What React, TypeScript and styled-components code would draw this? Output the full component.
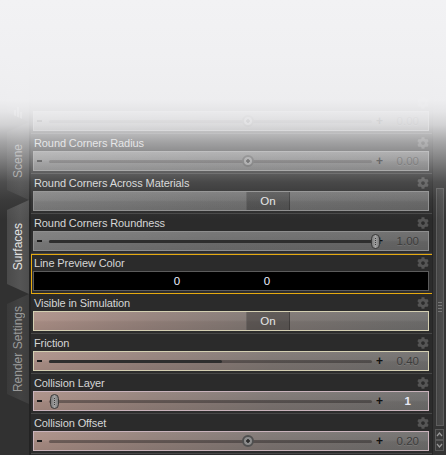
import React from 'react';
import styled, { createGlobalStyle, css } from 'styled-components';
import { FaCog } from 'react-icons/fa';

const Global = createGlobalStyle`
  html, body { margin: 0; padding: 0; background: #2c2c2c; }
  body { font-family: "Liberation Sans", Arial, sans-serif; }
  * { box-sizing: border-box; }
`;

const Frame = styled.div`
  position: relative;
  width: 446px;
  height: 455px;
  overflow: hidden;
  display: flex;
  background: #2c2c2c;
`;

const TabBar = styled.div`
  width: 31px;
  flex: none;
  display: flex;
  flex-direction: column;
  padding-top: 50px;
  background: #313131;
  border-right: 2px solid #232323;
`;

const Tab = styled.div<{ $active?: boolean; $h: number }>`
  height: ${(p) => p.$h}px;
  margin-left: 7px;
  width: 22px;
  display: flex;
  align-items: center;
  justify-content: center;
  clip-path: polygon(0 10px, 100% 0, 100% 100%, 0 calc(100% - 10px));
  background: ${(p) => (p.$active ? 'linear-gradient(90deg,#4a4a4a,#555 60%,#4e4e4e)' : 'linear-gradient(90deg,#3a3a3a,#424242 60%,#3e3e3e)')};
  color: ${(p) => (p.$active ? '#e4e4e4' : '#9a9a9a')};
  font-size: 12px;
`;

const TabLabel = styled.span`
  writing-mode: vertical-rl;
  transform: rotate(180deg);
  white-space: nowrap;
`;

const TabIcon = styled.svg`
  margin-top: 56px;
`;

const Content = styled.div`
  flex: 1;
  display: flex;
  flex-direction: column;
  padding-top: 94px;
  min-width: 0;
`;

const Block = styled.div<{ $selected?: boolean }>`
  height: 40px;
  flex: none;
  display: flex;
  flex-direction: column;
  border-bottom: 1px solid #474747;
  ${(p) =>
    p.$selected &&
    css`
      outline: 1px solid #e6aa10;
      outline-offset: -1px;
      margin-right: -1px;
      padding-right: 1px;
    `}
`;

const Header = styled.div`
  height: 17px;
  flex: none;
  display: flex;
  align-items: center;
  justify-content: space-between;
  padding: 0 2px 0 3px;
  background: #2b2b2b;
`;

const Label = styled.span`
  color: #d6d6d6;
  font-size: 11px;
  letter-spacing: -0.1px;
  white-space: nowrap;
`;

const Gear = styled(FaCog)`
  width: 12px;
  height: 12px;
  color: #555;
  margin-right: 1px;
`;

type Tone = 'gray' | 'pink' | 'cream';

const borderFor: Record<Tone, string> = {
  gray: '#8e8e8e',
  cream: '#d4cfb2',
  pink: '#c9b3bb',
};

const bgFor: Record<Tone, string> = {
  gray: 'linear-gradient(90deg,#7b7b7b 0%,#6e6e6e 45%,#666 100%)',
  cream: 'linear-gradient(90deg,#ac9087 0%,#93807a 30%,#7d7571 60%,#6e6d6c 100%)',
  pink: 'linear-gradient(90deg,#a98d84 0%,#917f79 30%,#7c7471 60%,#6d6c6b 100%)',
};

const Box = styled.div<{ $tone: Tone }>`
  height: 20px;
  flex: none;
  margin: 0 3px 0 2px;
  border: 1px solid ${(p) => borderFor[p.$tone]};
  display: flex;
  align-items: center;
  position: relative;
  background: linear-gradient(180deg, rgba(255,255,255,0.07) 0%, rgba(255,255,255,0.03) 45%, rgba(0,0,0,0.04) 55%, rgba(0,0,0,0.08) 100%),
    ${(p) => bgFor[p.$tone]};
`;

const Minus = styled.span`
  width: 5px;
  height: 2px;
  margin-left: 3px;
  background: #1c1c1c;
  flex: none;
`;

const Track = styled.div`
  flex: 1;
  height: 3px;
  margin-left: 7px;
  border-radius: 2px;
  background: rgba(40, 36, 36, 0.45);
  position: relative;
`;

const Fill = styled.div`
  position: absolute;
  left: 0;
  top: 0;
  bottom: 0;
  border-radius: 2px;
  background: #2e2e2e;
`;

const KnobCircle = styled.div`
  position: absolute;
  top: 50%;
  width: 12px;
  height: 12px;
  margin: -6px 0 0 -6px;
  border-radius: 50%;
  border: 2px solid #505050;
  background: radial-gradient(circle, #2e2e2e 0 1.5px, #8c8c8c 2px);
`;

const KnobPill = styled.div`
  position: absolute;
  top: 50%;
  width: 9px;
  height: 15px;
  margin: -7.5px 0 0 -4.5px;
  border-radius: 5px;
  border: 1px solid #3a3a3a;
  background: linear-gradient(90deg, #7a7a7a, #a2a2a2 50%, #7c7c7c);
  &::after {
    content: '';
    position: absolute;
    left: 3px;
    top: 3px;
    bottom: 3px;
    border-left: 1px dotted #3a3a3a;
  }
`;

const Plus = styled.span`
  flex: none;
  margin-left: 4px;
  width: 7px;
  color: #111;
  font-weight: bold;
  font-size: 12px;
  line-height: 10px;
  text-align: center;
`;

const Value = styled.span<{ $int?: boolean }>`
  flex: none;
  width: 45px;
  padding-right: ${(p) => (p.$int ? '17px' : '9px')};
  text-align: right;
  font-size: 11.5px;
  color: ${(p) => (p.$int ? '#e6e9f4' : '#3c3c3c')};
  font-weight: ${(p) => (p.$int ? 'bold' : 'normal')};
  text-shadow: ${(p) => (p.$int ? 'none' : '0 1px 0 rgba(255,255,255,0.12)')};
`;

const OnButton = styled.div`
  margin-left: 212px;
  width: 44px;
  align-self: stretch;
  display: flex;
  align-items: center;
  justify-content: center;
  background: rgba(30, 30, 30, 0.35);
  border-left: 1px solid rgba(255,255,255,0.08);
  border-right: 1px solid rgba(0,0,0,0.25);
  color: #e6e6e6;
  font-size: 11.5px;
`;

const ColorField = styled.div`
  height: 20px;
  flex: none;
  margin: 0 3px 0 2px;
  border: 1px solid #5c5c5c;
  background: #000;
  display: flex;
  align-items: center;
  padding-left: 98px;
`;

const Channel = styled.span`
  width: 90px;
  text-align: center;
  color: #eef2ff;
  font-size: 11.5px;
`;

const Scroll = styled.div`
  width: 14px;
  flex: none;
  display: flex;
  flex-direction: column;
  align-items: center;
  background: #343434;
  border-left: 1px solid #262626;
  padding-top: 188px;
`;

const Thumb = styled.div`
  width: 8px;
  height: 238px;
  border: 1px solid #5e5e5e;
  background: linear-gradient(90deg, #444, #4c4c4c);
  display: flex;
  align-items: center;
  justify-content: center;
`;

const Grip = styled.div`
  width: 4px;
  height: 11px;
  background: repeating-linear-gradient(180deg, #777 0 1px, transparent 1px 3px);
`;

const Arrows = styled.div`
  margin-top: 3px;
  display: flex;
  flex-direction: column;
  gap: 1px;
`;

const Fade = styled.div`
  position: absolute;
  left: 0;
  right: 0;
  top: 0;
  height: 230px;
  pointer-events: none;
  background: linear-gradient(
    180deg,
    rgba(242, 242, 244, 1) 0px,
    rgba(242, 242, 244, 0.99) 60px,
    rgba(242, 242, 244, 0.975) 100px,
    rgba(242, 242, 244, 0.93) 112px,
    rgba(242, 242, 244, 0.83) 125px,
    rgba(242, 242, 244, 0.6) 142px,
    rgba(242, 242, 244, 0.4) 160px,
    rgba(242, 242, 244, 0.15) 182px,
    rgba(242, 242, 244, 0.05) 200px,
    rgba(242, 242, 244, 0) 220px
  );
`;

type Param =
  | { kind: 'slider'; label: string; tone: Tone; value: string; knob?: 'circle' | 'pill'; pos?: number; fill?: number; int?: boolean }
  | { kind: 'toggle'; label: string; tone: Tone }
  | { kind: 'color'; label: string };

const params: Param[] = [
  { kind: 'slider', label: '', tone: 'gray', value: '0.00', knob: 'circle', pos: 0.616 },
  { kind: 'slider', label: 'Round Corners Radius', tone: 'gray', value: '0.00', knob: 'circle', pos: 0.616 },
  { kind: 'toggle', label: 'Round Corners Across Materials', tone: 'gray' },
  { kind: 'slider', label: 'Round Corners Roundness', tone: 'gray', value: '1.00', knob: 'pill', pos: 1.01, fill: 1 },
  { kind: 'color', label: 'Line Preview Color' },
  { kind: 'toggle', label: 'Visible in Simulation', tone: 'cream' },
  { kind: 'slider', label: 'Friction', tone: 'cream', value: '0.40', fill: 0.535 },
  { kind: 'slider', label: 'Collision Layer', tone: 'pink', value: '1', knob: 'pill', pos: 0.016, int: true },
  { kind: 'slider', label: 'Collision Offset', tone: 'pink', value: '0.20', knob: 'circle', pos: 0.616 },
];

function Control({ p }: { p: Param }) {
  if (p.kind === 'color') {
    return (
      <ColorField>
        <Channel>0</Channel>
        <Channel>0</Channel>
      </ColorField>
    );
  }
  if (p.kind === 'toggle') {
    return (
      <Box $tone={p.tone}>
        <OnButton>On</OnButton>
      </Box>
    );
  }
  return (
    <Box $tone={p.tone}>
      <Minus />
      <Track>
        {p.fill !== undefined && <Fill style={{ width: `${p.fill * 100}%` }} />}
        {p.knob === 'circle' && <KnobCircle style={{ left: `${(p.pos ?? 0) * 100}%` }} />}
        {p.knob === 'pill' && <KnobPill style={{ left: `${(p.pos ?? 0) * 100}%` }} />}
      </Track>
      <Plus>+</Plus>
      <Value $int={p.int}>{p.value}</Value>
    </Box>
  );
}

export default function App() {
  return (
    <>
      <Global />
      <Frame>
        <TabBar>
          <Tab $h={72}>
            <TabIcon width="10" height="16" viewBox="0 0 10 16">
              <path d="M2 14V4M5 14V1M8 14V6" stroke="#9a9a9a" strokeWidth="1.4" />
            </TabIcon>
          </Tab>
          <Tab $h={78}>
            <TabLabel>Scene</TabLabel>
          </Tab>
          <Tab $h={94} $active>
            <TabLabel>Surfaces</TabLabel>
          </Tab>
          <Tab $h={110}>
            <TabLabel>Render Settings</TabLabel>
          </Tab>
        </TabBar>
        <Content>
          {params.map((p, i) => (
            <Block key={i} $selected={p.kind === 'color'}>
              <Header>
                <Label>{p.label}</Label>
                <Gear />
              </Header>
              <Control p={p} />
            </Block>
          ))}
        </Content>
        <Scroll>
          <Thumb>
            <Grip />
          </Thumb>
          <Arrows>
            <svg width="9" height="22" viewBox="0 0 9 22">
              <rect x="0.5" y="0.5" width="8" height="10" fill="#3c3c3c" stroke="#5a5a5a" />
              <path d="M2 7l2.5-3 2.5 3" fill="none" stroke="#9a9a9a" strokeWidth="1.2" />
              <rect x="0.5" y="11.5" width="8" height="10" fill="#3c3c3c" stroke="#5a5a5a" />
              <path d="M2 15l2.5 3 2.5-3" fill="none" stroke="#9a9a9a" strokeWidth="1.2" />
            </svg>
          </Arrows>
        </Scroll>
        <Fade />
      </Frame>
    </>
  );
}
